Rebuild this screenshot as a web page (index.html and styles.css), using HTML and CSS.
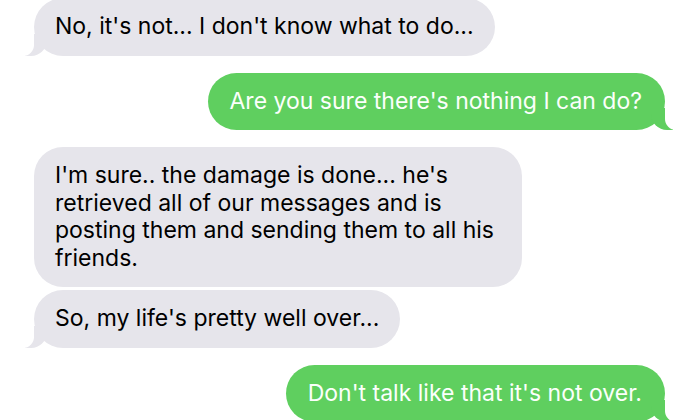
FILE: index.html
```html
<!DOCTYPE html>
<html lang="en">
<head>
    <meta charset="UTF-8">
    <meta name="viewport" content="width=device-width, initial-scale=1.0">
    <title>Messages</title>
    <link rel="stylesheet" href="styles.css">
</head>
<body>
    <div class="thread">
        <div class="bubble received tail">No, it's not... I don't know what to do...</div>
        <div class="bubble sent tail">Are you sure there's nothing I can do?</div>
        <div class="bubble received wide">I'm sure.. the damage is done... he's<br>retrieved all of our messages and is<br>posting them and sending them to all his<br>friends.</div>
        <div class="bubble received tail grouped">So, my life's pretty well over...</div>
        <div class="bubble sent tail">Don't talk like that it's not over.</div>
    </div>
</body>
</html>
```

FILE: styles.css
```css
:root {
    --gray-bubble: #e6e5eb;
    --green-bubble: #5fcf5f;
    --background-color: #ffffff;
}

body {
    font-family: Inter, "Noto Sans", sans-serif;
    background-color: var(--background-color);
    margin: 0;
    padding: 0;
    overflow: hidden;
}

.thread {
    display: flex;
    flex-direction: column;
    gap: 17px;
    padding: 0 35px 0 34px;
    margin-top: -2px;
}

.bubble {
    position: relative;
    max-width: 480px;
    padding: 15px 21px;
    font-size: 23px;
    line-height: 27.5px;
    border-radius: 29px;
}

.received {
    align-self: flex-start;
    background: var(--gray-bubble);
    color: #000;
}

.sent {
    align-self: flex-end;
    background: var(--green-bubble);
    color: #fbfffb;
    padding: 15px 23px 15px 22px;
}

.wide {
    padding-right: 28px;
}

.grouped {
    margin-top: -14px;
}

/* tail */
.tail::before,
.tail::after {
    content: "";
    position: absolute;
    bottom: 0;
    height: 22px;
}

.received.tail::before {
    left: -9px;
    width: 22px;
    background: var(--gray-bubble);
    border-bottom-right-radius: 16px;
}

.received.tail::after {
    left: -28px;
    width: 28px;
    background: var(--background-color);
    border-bottom-right-radius: 11px;
}

.sent.tail::before {
    right: -8px;
    width: 22px;
    background: var(--green-bubble);
    border-bottom-left-radius: 16px;
}

.sent.tail::after {
    right: -28px;
    width: 28px;
    background: var(--background-color);
    border-bottom-left-radius: 11px;
}
```
